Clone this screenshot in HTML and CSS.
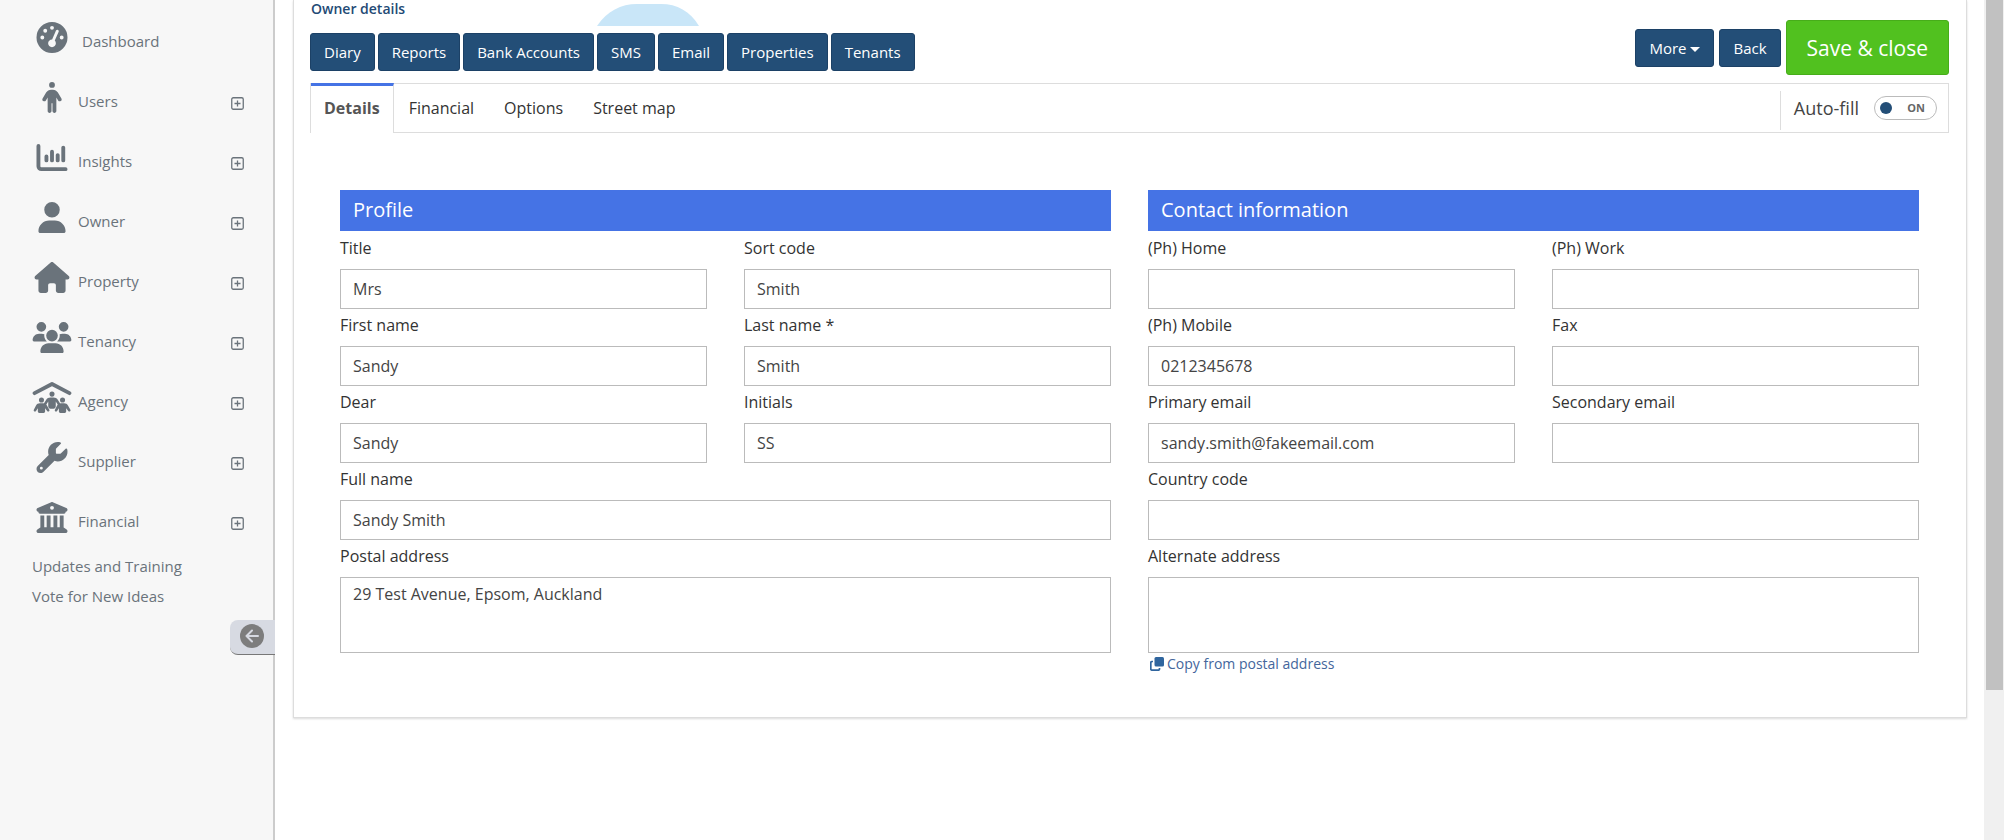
FILE: index.html
```html
<!DOCTYPE html>
<html lang="en">
	<head>
		<meta charset="UTF-8">
		<title>Owner details</title>
		<link rel="stylesheet" href="styles.css">
	</head>
	<body>
		<svg class="sprite" aria-hidden="true">
			<symbol id="plus" viewBox="0 0 13 13">
				<rect x="0.75" y="0.75" width="11.5" height="11.5" rx="1.5" fill="none" stroke="currentColor" stroke-width="1.3"/>
				<path d="M6.5 3.5v6M3.5 6.5h6" fill="none" stroke="currentColor" stroke-width="1.3"/>
			</symbol>
		</svg>

		<aside class="sidebar">
			<nav>
				<ul class="menu">
					<li class="dashboard">
						<svg class="icon" viewBox="-64 0 640 512"><path d="M0 256a256 256 0 1 1 512 0A256 256 0 1 1 0 256zM288 96a32 32 0 1 0 -64 0 32 32 0 1 0 64 0zM256 416c35.3 0 64-28.7 64-64c0-17.4-6.9-33.1-18.1-44.6L366 161.7c5.3-12.1-.2-26.3-12.3-31.6s-26.3 .2-31.6 12.3L257.9 288c-.6 0-1.3 0-1.9 0c-35.3 0-64 28.7-64 64s28.7 64 64 64zM176 144a32 32 0 1 0 -64 0 32 32 0 1 0 64 0zM96 288a32 32 0 1 0 0-64 32 32 0 1 0 0 64zm352-32a32 32 0 1 0 -64 0 32 32 0 1 0 64 0z"/></svg>
						<a href="#">Dashboard</a>
					</li>
					<li>
						<svg class="icon" viewBox="-160 0 640 512"><path d="M112 48a48 48 0 1 1 96 0 48 48 0 1 1 -96 0zm40 304V480c0 17.7-14.3 32-32 32s-32-14.3-32-32V256.9L59.4 304.5c-9.1 15.1-28.8 20-43.9 10.9s-20-28.8-10.9-43.9l58.3-97c17.4-28.9 48.6-46.6 82.3-46.6h29.7c33.7 0 64.9 17.7 82.3 46.6l58.3 97c9.1 15.1 4.2 34.8-10.9 43.9s-34.8 4.2-43.9-10.9L232 256.9V480c0 17.7-14.3 32-32 32s-32-14.3-32-32V352H152z"/></svg>
						<a href="#">Users</a>
						<button type="button" aria-label="Expand Users"><svg><use href="#plus"/></svg></button>
					</li>
					<li>
						<svg class="icon" viewBox="-64 0 640 512"><path class="line" d="M32 64V400a48 48 0 0 0 48 48H480M164 240v64M256 160v144M350 216v88M442 92v212"/></svg>
						<a href="#">Insights</a>
						<button type="button" aria-label="Expand Insights"><svg><use href="#plus"/></svg></button>
					</li>
					<li>
						<svg class="icon" viewBox="-96 0 640 512"><path d="M224 256A128 128 0 1 0 224 0a128 128 0 1 0 0 256zm-45.7 48C79.8 304 0 383.8 0 482.3C0 498.7 13.3 512 29.7 512H418.3c16.4 0 29.7-13.3 29.7-29.7C448 383.8 368.2 304 269.7 304H178.3z"/></svg>
						<a href="#">Owner</a>
						<button type="button" aria-label="Expand Owner"><svg><use href="#plus"/></svg></button>
					</li>
					<li>
						<svg class="icon" viewBox="-32 0 640 512"><path d="M575.8 255.5c0 18-15 32.1-32 32.1h-32l.7 160.2c0 2.7-.2 5.4-.5 8.1V472c0 22.1-17.9 40-40 40H456c-1.1 0-2.2 0-3.3-.1c-1.4 .1-2.8 .1-4.2 .1H416 392c-22.1 0-40-17.9-40-40V448 384c0-17.7-14.3-32-32-32H256c-17.7 0-32 14.3-32 32v64 24c0 22.1-17.9 40-40 40H160 128.1c-1.5 0-3-.1-4.5-.2c-1.2 .1-2.4 .2-3.6 .2H104c-22.1 0-40-17.9-40-40V360c0-.9 0-1.9 .1-2.8V287.6H32c-18 0-32-14-32-32.1c0-9 3-17 10-24L266.4 8c7-7 15-8 22-8s15 2 21 7L564.8 231.5c8 7 12 15 11 24z"/></svg>
						<a href="#">Property</a>
						<button type="button" aria-label="Expand Property"><svg><use href="#plus"/></svg></button>
					</li>
					<li>
						<svg class="icon" viewBox="0 0 640 512"><path d="M144 0a80 80 0 1 1 0 160A80 80 0 1 1 144 0zM512 0a80 80 0 1 1 0 160A80 80 0 1 1 512 0zM0 298.7C0 239.8 47.8 192 106.7 192h42.7c15.9 0 31 3.5 44.6 9.7c-1.3 7.2-1.9 14.7-1.9 22.3c0 38.2 16.8 72.5 43.3 96c-.2 0-.4 0-.7 0H21.3C9.6 320 0 310.4 0 298.7zM405.3 320c-.2 0-.4 0-.7 0c26.6-23.5 43.3-57.8 43.3-96c0-7.6-.7-15-1.9-22.3c13.6-6.3 28.7-9.7 44.6-9.7h42.7C592.2 192 640 239.8 640 298.7c0 11.8-9.6 21.3-21.3 21.3H405.3zM224 224a96 96 0 1 1 192 0 96 96 0 1 1 -192 0zM128 485.3C128 411.7 187.7 352 261.3 352H378.7C452.3 352 512 411.7 512 485.3c0 14.7-11.9 26.7-26.7 26.7H154.7c-14.7 0-26.7-11.9-26.7-26.7z"/></svg>
						<a href="#">Tenancy</a>
						<button type="button" aria-label="Expand Tenancy"><svg><use href="#plus"/></svg></button>
					</li>
					<li>
						<svg class="icon" viewBox="0 0 640 512">
							<path class="line" d="M32 184L320 34L608 184"/>
							<circle cx="320" cy="200" r="42"/><circle cx="146" cy="296" r="42"/><circle cx="494" cy="296" r="42"/>
							<path d="M294 256h52c30 0 54 14 70 38l38 62c12 24-22 42-38 20l-34-52v78c0 28-18 40-34 40h-56c-16 0-34-12-34-40v-78l-34 52c-16 22-50 4-38-20l38-62c16-24 40-38 70-38z"/>
							<path id="kid" d="M120 352h52c30 0 50 14 64 38l40 68c12 24-20 42-36 20l-34-46v56c0 14-10 24-24 24h-72c-14 0-24-10-24-24v-56l-30 46c-16 22-48 4-36-20l36-68c14-24 34-38 64-38z"/>
							<use href="#kid" x="348"/>
						</svg>
						<a href="#">Agency</a>
						<button type="button" aria-label="Expand Agency"><svg><use href="#plus"/></svg></button>
					</li>
					<li>
						<svg class="icon" viewBox="-64 0 640 512"><path d="M352 320c88.4 0 160-71.6 160-160c0-15.3-2.2-30.1-6.2-44.2c-3.1-10.8-16.4-13.2-24.3-5.3l-76.8 76.8c-3 3-7.1 4.7-11.3 4.7H336c-8.8 0-16-7.2-16-16V118.6c0-4.2 1.7-8.3 4.7-11.3l76.8-76.8c7.9-7.9 5.4-21.2-5.3-24.3C382.1 2.2 367.3 0 352 0C263.6 0 192 71.6 192 160c0 19.1 3.4 37.5 9.5 54.5L19.9 396.1C7.2 408.8 0 426.1 0 444.1C0 481.6 30.4 512 67.9 512c18 0 35.3-7.2 48-19.9L297.5 310.5c17 6.2 35.4 9.5 54.5 9.5zM80 408a24 24 0 1 1 0 48 24 24 0 1 1 0-48z"/></svg>
						<a href="#">Supplier</a>
						<button type="button" aria-label="Expand Supplier"><svg><use href="#plus"/></svg></button>
					</li>
					<li>
						<svg class="icon" viewBox="-64 0 640 512"><path d="M243.4 2.6l-224 96c-14 6-21.8 21-18.7 35.8S16.8 160 32 160v8c0 13.3 10.7 24 24 24H456c13.3 0 24-10.7 24-24v-8c15.2 0 28.3-10.7 31.3-25.6s-4.8-29.9-18.7-35.8l-224-96c-8-3.4-17.2-3.4-25.2 0zM128 224H64V420.3c-.6 .3-1.2 .7-1.8 1.1l-48 32c-11.7 7.8-17 22.4-12.9 35.9S17.9 512 32 512H480c14.1 0 26.5-9.2 30.6-22.7s-1.1-28.1-12.9-35.9l-48-32c-.6-.4-1.2-.7-1.8-1.1V224H384V416H344V224H280V416H232V224H168V416H128V224zM256 64a32 32 0 1 1 0 64 32 32 0 1 1 0-64z"/></svg>
						<a href="#">Financial</a>
						<button type="button" aria-label="Expand Financial"><svg><use href="#plus"/></svg></button>
					</li>
				</ul>
				<ul class="links">
					<li><a href="#">Updates and Training</a></li>
					<li><a href="#">Vote for New Ideas</a></li>
				</ul>
			</nav>
			<button class="collapse" type="button" aria-label="Collapse menu">
				<svg viewBox="0 0 24 24"><circle cx="12" cy="12" r="12" fill="#7d7d7d"/><path d="M12 6.5L6.5 12L12 17.5M6.5 12H18" fill="none" stroke="#d7dae2" stroke-width="2" stroke-linecap="round" stroke-linejoin="round"/></svg>
			</button>
		</aside>

		<main>
			<div class="panel">
				<svg class="bubble" viewBox="0 0 102 22" aria-hidden="true"><path d="M0 22C10 7 24 0 40 0H64C80 0 93 7 102 22z"/></svg>
				<header>
					<div>
						<h1>Owner details</h1>
						<div class="buttons">
							<button class="btn" type="button">Diary</button>
							<button class="btn" type="button">Reports</button>
							<button class="btn" type="button">Bank Accounts</button>
							<button class="btn" type="button">SMS</button>
							<button class="btn" type="button">Email</button>
							<button class="btn" type="button">Properties</button>
							<button class="btn" type="button">Tenants</button>
						</div>
					</div>
					<div class="actions">
						<button class="btn more" type="button">More <svg viewBox="0 0 10 5"><path d="M0 0h10L5 5z"/></svg></button>
						<button class="btn" type="button">Back</button>
						<button class="btn save" type="submit" form="owner">Save &amp; close</button>
					</div>
				</header>

				<div class="tabs">
					<a class="active" href="#">Details</a>
					<a href="#">Financial</a>
					<a href="#">Options</a>
					<a href="#">Street map</a>
					<div class="autofill">
						<label for="autofill">Auto-fill</label>
						<input id="autofill" type="checkbox" checked>
					</div>
				</div>

				<form id="owner">
					<section>
						<h2>Profile</h2>
						<div class="field"><label for="title">Title</label><input id="title" type="text" value="Mrs"></div>
						<div class="field"><label for="sort">Sort code</label><input id="sort" type="text" value="Smith"></div>
						<div class="field"><label for="first">First name</label><input id="first" type="text" value="Sandy"></div>
						<div class="field"><label for="last">Last name *</label><input id="last" type="text" value="Smith"></div>
						<div class="field"><label for="dear">Dear</label><input id="dear" type="text" value="Sandy"></div>
						<div class="field"><label for="initials">Initials</label><input id="initials" type="text" value="SS"></div>
						<div class="field wide"><label for="full">Full name</label><input id="full" type="text" value="Sandy Smith"></div>
						<div class="field wide"><label for="postal">Postal address</label><textarea id="postal">29 Test Avenue, Epsom, Auckland</textarea></div>
					</section>
					<section>
						<h2>Contact information</h2>
						<div class="field"><label for="home">(Ph) Home</label><input id="home" type="text"></div>
						<div class="field"><label for="work">(Ph) Work</label><input id="work" type="text"></div>
						<div class="field"><label for="mobile">(Ph) Mobile</label><input id="mobile" type="text" value="0212345678"></div>
						<div class="field"><label for="fax">Fax</label><input id="fax" type="text"></div>
						<div class="field"><label for="email">Primary email</label><input id="email" type="text" value="sandy.smith@fakeemail.com"></div>
						<div class="field"><label for="email2">Secondary email</label><input id="email2" type="text"></div>
						<div class="field wide"><label for="country">Country code</label><input id="country" type="text"></div>
						<div class="field wide"><label for="alternate">Alternate address</label><textarea id="alternate"></textarea></div>
						<a class="copy" href="#">
							<svg viewBox="0 0 14 14"><rect x="4.5" y="0" width="9.5" height="9.5" rx="1.5"/><path d="M3 4.5H2a1.2 1.2 0 0 0-1.2 1.2V12a1.2 1.2 0 0 0 1.2 1.2H8.3A1.2 1.2 0 0 0 9.5 12V11" fill="none" stroke="#2f659e" stroke-width="1.7"/></svg>
							Copy from postal address
						</a>
					</section>
				</form>
			</div>
		</main>

		<div class="scrollbar"><div class="thumb"></div></div>
	</body>
</html>
```
FILE: styles.css
```css
* {
	box-sizing: border-box;
	font-family: "Open Sans", sans-serif;
}
body {
	background: #fff;
	color: #333;
	display: flex;
	font-size: 16px;
	line-height: 24px;
	margin: 0;
	min-height: 100vh;
}
ul {
	list-style: none;
	margin: 0;
	padding: 0;
}
a {
	color: inherit;
	text-decoration: none;
}
.sprite {
	display: none;
}

/* sidebar */
.sidebar {
	background: #f7f7f7;
	border-right: 2px solid #ccc;
	color: #6a737b;
	display: flex;
	flex: none;
	flex-direction: column;
	font-size: 15px;
	padding-top: 22px;
	width: 275px;
}
.menu {
	display: flex;
	flex-direction: column;
	gap: 28px;
}
.menu li {
	align-items: flex-start;
	display: flex;
	height: 32px;
	padding: 0 29px 0 32px;
}
.icon {
	fill: #6a737b;
	height: 31px;
	margin-right: 6px;
	width: 40px;
}
.dashboard .icon {
	margin-right: 10px;
}
.line {
	fill: none;
	stroke: #6a737b;
	stroke-linecap: round;
	stroke-linejoin: round;
	stroke-width: 64;
}
.menu a {
	flex: 1;
	padding-top: 7px;
}
.menu button {
	background: none;
	border: 0;
	color: #6a737b;
	display: flex;
	margin-top: 15px;
	padding: 0;
}
.menu button svg {
	height: 13px;
	width: 13px;
}
.links {
	line-height: 30px;
	margin-top: 17px;
	padding-left: 32px;
}
.collapse {
	align-self: flex-end;
	background: #d7dae2;
	border: 0;
	border-bottom: 1px solid #777;
	border-radius: 8px 0 0 8px;
	display: flex;
	height: 35px;
	margin: 9px -2px 0 0;
	padding: 4px 10px;
	width: 45px;
}
.collapse svg {
	height: 24px;
	width: 24px;
}

/* panel */
main {
	flex: 1;
	padding: 0 17px 0 18px;
}
.panel {
	border: 1px solid #ddd;
	border-top: 0;
	box-shadow: 0 1px 2px rgba(0, 0, 0, 0.15);
	padding: 0 17px 42px 16px;
	position: relative;
}
.bubble {
	fill: #c9e6f8;
	height: 22px;
	left: 303px;
	position: absolute;
	top: 4px;
	width: 102px;
}
header {
	display: flex;
	justify-content: space-between;
}
h1 {
	color: #234a75;
	font-size: 14px;
	font-weight: 600;
	line-height: 18px;
	margin: 0 0 15px 1px;
}
.buttons {
	display: flex;
	gap: 3px;
}
.actions {
	align-items: center;
	display: flex;
	gap: 5px;
	padding-top: 20px;
}
.btn {
	background: #234e77;
	border: 1px solid #1c4166;
	border-radius: 3px;
	color: #fff;
	font-size: 15px;
	height: 38px;
	line-height: 22px;
	padding: 0 13px;
}
.more svg {
	fill: #fff;
	height: 5px;
	vertical-align: middle;
	width: 10px;
}
.save {
	background: #51c11f;
	border-color: #47ad1a;
	font-size: 21px;
	height: 55px;
	padding: 0 20px;
}

/* tabs */
.tabs {
	border: 1px solid #ddd;
	display: flex;
	margin-top: 8px;
}
.tabs a {
	line-height: 48px;
	padding: 0 15px;
}
.tabs .active {
	background: #fff;
	border-right: 1px solid #ddd;
	border-top: 3px solid #4573e5;
	color: #555;
	font-weight: 700;
	line-height: 44px;
	margin: -1px 0 -1px;
	padding: 0 13px;
}
.autofill {
	align-items: center;
	border-left: 1px solid #ddd;
	color: #444;
	display: flex;
	font-size: 18px;
	gap: 15px;
	margin: 7px 11px 2px auto;
	padding: 0 0 6px 13px;
}
.autofill input {
	align-items: center;
	appearance: none;
	border: 1px solid #bbb;
	border-radius: 12px;
	display: flex;
	height: 24px;
	justify-content: space-between;
	margin: 0;
	padding: 0 11px 0 5px;
	width: 63px;
}
.autofill input::before {
	background: #234e77;
	border-radius: 50%;
	content: "";
	height: 12px;
	width: 12px;
}
.autofill input::after {
	color: #666;
	content: "ON";
	font-size: 11px;
	font-weight: 700;
}

/* form */
form {
	display: grid;
	gap: 37px;
	grid-template-columns: 1fr 1fr;
	padding: 57px 30px 0;
}
section {
	align-content: start;
	column-gap: 37px;
	display: grid;
	grid-template-columns: 1fr 1fr;
}
h2 {
	background: #4573e5;
	color: #fff;
	font-size: 20px;
	font-weight: 400;
	grid-column: 1 / -1;
	line-height: 40px;
	margin: 0 0 1px;
	padding: 0 13px 1px;
}
.wide {
	grid-column: 1 / -1;
}
.field label {
	display: block;
	padding: 4px 0 9px;
}
.field input, textarea {
	background: #fff;
	border: 1px solid #bbb;
	color: #444;
	display: block;
	font-size: 16px;
	height: 40px;
	line-height: 24px;
	padding: 0 12px;
	width: 100%;
}
textarea {
	height: 76px;
	padding: 4px 12px;
	resize: none;
}
.copy {
	align-items: center;
	color: #44669c;
	display: flex;
	font-size: 14px;
	gap: 3px;
	grid-column: 1 / -1;
	line-height: 22px;
	padding-left: 2px;
}
.copy svg {
	fill: #2f659e;
	height: 14px;
	width: 14px;
}

/* scrollbar */
.scrollbar {
	background: #f0f0f0;
	height: 100vh;
	padding: 0 1px 0 2px;
	width: 20px;
}
.thumb {
	background: #c1c1c1;
	height: 690px;
}
```
